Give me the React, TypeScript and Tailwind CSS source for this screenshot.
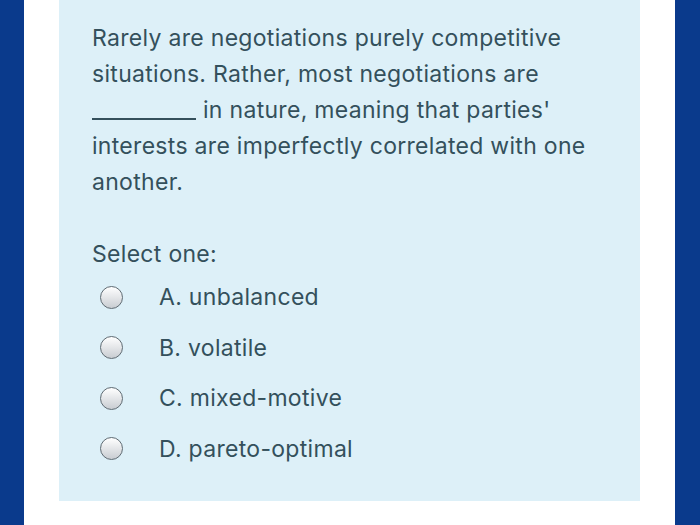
const options = ['A. unbalanced', 'B. volatile', 'C. mixed-motive', 'D. pareto-optimal'];

const Radio = () => (
  <span className="block h-[23px] w-[23px] rounded-full border-[1.5px] border-[#5f6b73] bg-gradient-to-b from-white to-[#c9cdd2]" />
);

export default function App() {
  return (
    <div
      className="flex h-[525px] w-[700px] bg-white"
      style={{ fontFamily: 'Inter, "Liberation Sans", Arial, sans-serif' }}
    >
      <div className="w-[24px] bg-[#0a3a8c]" />
      <div className="flex-1 px-[35px]">
        <div className="h-[501px] bg-[#ddf0f8] pl-[33px] pr-[10px] pt-[20px] text-[23px] leading-[36px] tracking-[0.3px] text-[#34505c]">
          <p>
            Rarely are negotiations purely competitive
            <br />
            situations. Rather, most negotiations are
            <br />
            <span className="inline-block w-[104px] border-b-2 border-[#34505c] align-[-2px]" />
            <span className="ml-[7px]">in nature, meaning that parties'</span>
            <br />
            interests are imperfectly correlated with one
            <br />
            another.
          </p>
          <p className="mt-[36px]">Select one:</p>
          <div className="flex flex-col">
            {options.map(o => (
              <div key={o} className="flex h-[50.5px] items-center">
                <span className="ml-[8px] mr-[36px]">
                  <Radio />
                </span>
                <span>{o}</span>
              </div>
            ))}
          </div>
        </div>
      </div>
      <div className="w-[25px] bg-[#0a3a8c]" />
    </div>
  );
}
